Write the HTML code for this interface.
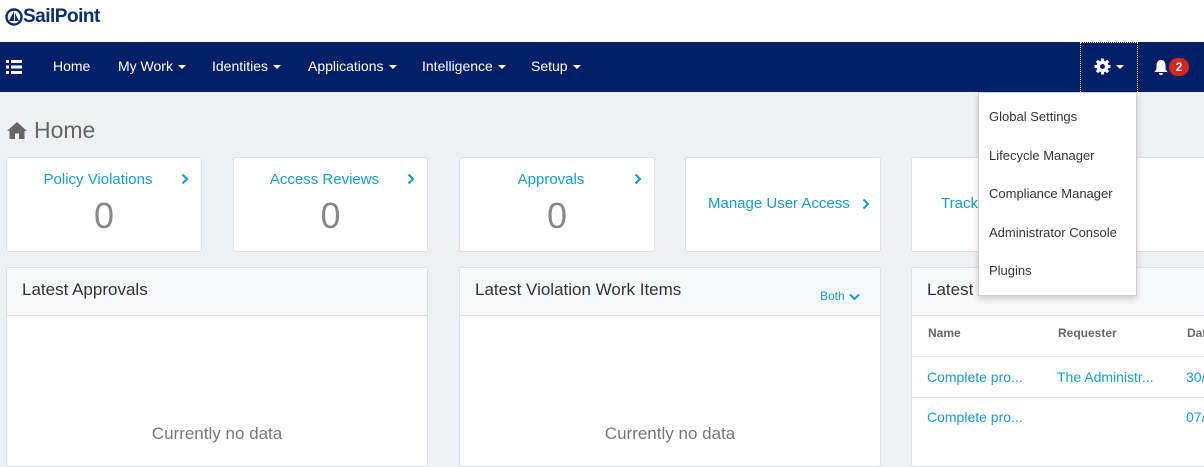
<!DOCTYPE html>
<html><head><style>
*{box-sizing:border-box;margin:0;padding:0}
body{width:1204px;height:464px;overflow:hidden;background:#eef0f3;font-family:"Liberation Sans",Arial,sans-serif;position:relative}
.hdr{position:absolute;left:0;top:0;width:1204px;height:42px;background:#fff}
.logo{position:absolute;left:23px;top:6px;font-weight:bold;font-size:19px;color:#0c2f6b;letter-spacing:-0.5px}
.nav{position:absolute;left:0;top:42px;width:1204px;height:50px;background:#022068;color:#fff;font-size:14px}
.nav span{position:absolute;top:16px}
.car{display:inline-block;border-left:4px solid transparent;border-right:4px solid transparent;border-top:4px solid #fff;vertical-align:middle;margin-left:5px}
.card{position:absolute;top:157px;height:95px;background:#fff;border:1px solid #dcdfe4;border-radius:3px;color:#1a9bc9;font-size:15px;text-align:center}
.card .t{position:absolute;left:0;right:12px;top:13px}
.card .n{position:absolute;left:0;right:0;top:37px;font-size:36px;color:#888}
.chev{position:absolute;top:15px;right:12px}
.pan{position:absolute;top:267px;height:200px;background:#fff;border:1px solid #dcdfe4;border-radius:3px}
.ph{height:48px;background:#f7f8fa;border-bottom:1px solid #dcdfe4;font-size:17px;color:#333;padding:12px 0 0 15px}
.nd{position:absolute;left:0;right:0;top:156px;text-align:center;color:#777;font-size:17px}
.dd{position:absolute;left:979px;top:92px;width:159px;height:204px;background:#fff;border:1px solid #ccc;box-shadow:0 3px 6px rgba(0,0,0,.18);font-size:13px;color:#333}
.dd div{position:absolute;left:10px}
</style></head><body>
<div class="hdr">
<svg style="position:absolute;left:5px;top:8px" width="18" height="18" viewBox="0 0 18 18"><circle cx="9" cy="9" r="7.5" fill="none" stroke="#0c2f6b" stroke-width="2.4"/><path d="M9 3 L9 13 L4 13 Z" fill="#0c2f6b"/><path d="M10 5 L14 13 L10 13 Z" fill="#0c2f6b"/></svg>
<div class="logo">SailPoint</div></div>
<div class="nav">
<svg style="position:absolute;left:6px;top:18px" width="16" height="14"><g fill="#fff"><rect x="0" y="0" width="3" height="3"/><rect x="5" y="0" width="11" height="3"/><rect x="0" y="5.5" width="3" height="3"/><rect x="5" y="5.5" width="11" height="3"/><rect x="0" y="11" width="3" height="3"/><rect x="5" y="11" width="11" height="3"/></g></svg>
<span style="left:53px">Home</span>
<span style="left:118px">My Work<i class="car"></i></span>
<span style="left:212px">Identities<i class="car"></i></span>
<span style="left:308px">Applications<i class="car"></i></span>
<span style="left:422px">Intelligence<i class="car"></i></span>
<span style="left:531px">Setup<i class="car"></i></span>
<div style="position:absolute;left:1080px;top:0;width:58px;height:50px;border:1px dotted #fff;border-bottom:none"></div>
<svg style="position:absolute;left:1094px;top:16px" width="17" height="17" viewBox="0 0 16 16"><g fill="#fff"><circle cx="8" cy="8" r="5.5"/><rect x="6.5" y="0.5" width="3" height="15" rx="0.5"/><rect x="0.5" y="6.5" width="15" height="3" rx="0.5"/><rect x="6.5" y="0.5" width="3" height="15" rx="0.5" transform="rotate(45 8 8)"/><rect x="6.5" y="0.5" width="3" height="15" rx="0.5" transform="rotate(-45 8 8)"/></g><circle cx="8" cy="8" r="2.3" fill="#022068"/></svg>
<i class="car" style="position:absolute;left:1111px;top:23px"></i>
<svg style="position:absolute;left:1153px;top:17px" width="16" height="17" viewBox="0 0 16 17"><path d="M8 1 C4.5 1 3.5 4 3.5 7 L3.5 10 L1.5 13 L14.5 13 L12.5 10 L12.5 7 C12.5 4 11.5 1 8 1 Z" fill="#fff"/><path d="M6 14 a2 2 0 0 0 4 0 Z" fill="#fff"/></svg>
<span style="left:1169px;top:16px;width:20px;height:18px;border-radius:9px;background:#d9261c;font-size:12px;font-weight:bold;text-align:center;line-height:18px">2</span>
</div>
<svg style="position:absolute;left:6px;top:121px" width="22" height="18" viewBox="0 0 22 18"><path d="M11 1 L1 10 L3.5 10 L3.5 18 L9 18 L9 12.5 L13 12.5 L13 18 L18.5 18 L18.5 10 L21 10 Z" fill="#666"/></svg>
<div style="position:absolute;left:34px;top:117px;font-size:23px;color:#666">Home</div>
<div class="card" style="left:6px;width:196px"><div class="t">Policy Violations</div><div class="n">0</div><svg class="chev" width="8" height="12" viewBox="0 0 8 12"><path d="M1.5 1.5 L6 6 L1.5 10.5" fill="none" stroke="#1a9bc9" stroke-width="2.2"/></svg></div>
<div class="card" style="left:233px;width:195px"><div class="t">Access Reviews</div><div class="n">0</div><svg class="chev" width="8" height="12" viewBox="0 0 8 12"><path d="M1.5 1.5 L6 6 L1.5 10.5" fill="none" stroke="#1a9bc9" stroke-width="2.2"/></svg></div>
<div class="card" style="left:459px;width:196px"><div class="t">Approvals</div><div class="n">0</div><svg class="chev" width="8" height="12" viewBox="0 0 8 12"><path d="M1.5 1.5 L6 6 L1.5 10.5" fill="none" stroke="#1a9bc9" stroke-width="2.2"/></svg></div>
<div class="card" style="left:685px;width:196px"><div class="t" style="top:37px;left:22px;right:auto">Manage User Access</div><svg style="position:absolute;left:176px;top:40px" width="8" height="12" viewBox="0 0 8 12"><path d="M1.5 1.5 L6 6 L1.5 10.5" fill="none" stroke="#1a9bc9" stroke-width="2.2"/></svg></div>
<div class="card" style="left:911px;width:300px;text-align:left"><div class="t" style="top:37px;left:29px">Track</div></div>
<div class="pan" style="left:6px;width:422px"><div class="ph">Latest Approvals</div><div class="nd">Currently no data</div></div>
<div class="pan" style="left:459px;width:422px"><div class="ph">Latest Violation Work Items<span style="position:absolute;left:360px;top:21px;font-size:12px;color:#1a9bc9">Both</span><svg style="position:absolute;left:389px;top:25px" width="11" height="8" viewBox="0 0 11 8"><path d="M1 1.5 L5.5 6 L10 1.5" fill="none" stroke="#1a9bc9" stroke-width="2"/></svg></div><div class="nd">Currently no data</div></div>
<div class="pan" style="left:911px;width:300px"><div class="ph">Latest</div>
<div style="position:absolute;top:58px;left:16px;font-size:12px;color:#666;font-weight:bold">Name</div>
<div style="position:absolute;top:58px;left:146px;font-size:12px;color:#666;font-weight:bold">Requester</div>
<div style="position:absolute;top:58px;left:275px;font-size:12px;color:#666;font-weight:bold">Dat</div>
<div style="position:absolute;top:88px;left:0;right:0;border-top:1px solid #e3e5e8"></div>
<div style="position:absolute;top:101px;left:15px;font-size:14px;color:#1a9bc9">Complete pro...</div>
<div style="position:absolute;top:101px;left:145px;font-size:14px;color:#1a9bc9">The Administr...</div>
<div style="position:absolute;top:101px;left:274px;font-size:14px;color:#1a9bc9">30/</div>
<div style="position:absolute;top:129px;left:0;right:0;border-top:1px solid #e3e5e8"></div>
<div style="position:absolute;top:141px;left:15px;font-size:14px;color:#1a9bc9">Complete pro...</div>
<div style="position:absolute;top:141px;left:274px;font-size:14px;color:#1a9bc9">07/</div>
</div>
<div class="dd" style="left:978px">
<div style="top:16px">Global Settings</div>
<div style="top:55px">Lifecycle Manager</div>
<div style="top:93px">Compliance Manager</div>
<div style="top:132px">Administrator Console</div>
<div style="top:170px">Plugins</div>
</div>
</body></html>
